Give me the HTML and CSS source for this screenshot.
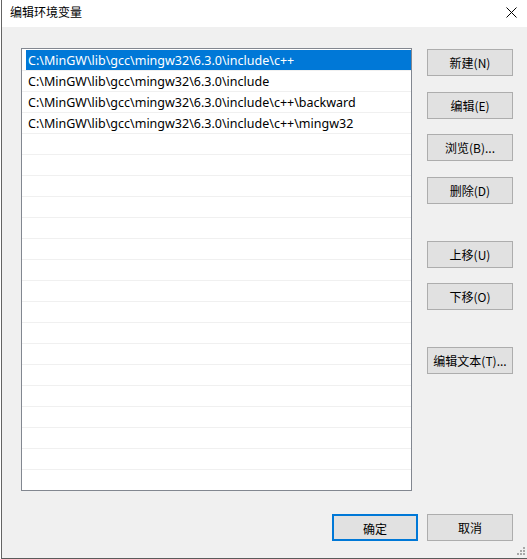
FILE: index.html
```html
<!DOCTYPE html>
<html lang="zh-CN">
<head>
<meta charset="utf-8">
<title>编辑环境变量</title>
<link rel="stylesheet" href="styles.css">
</head>
<body>
<div class="window">
  <div class="titlebar">
    <span class="title">编辑环境变量</span>
    <svg class="close" width="11" height="11" viewBox="0 0 11 11"><path d="M0.5 0.5 L10.5 10.5 M10.5 0.5 L0.5 10.5" stroke="#000" stroke-width="1" fill="none"/></svg>
  </div>
  <div class="content">
    <div class="main">
      <div class="listbox">
        <div class="row selected"><span>C:\MinGW\lib\gcc\mingw32\6.3.0\include\c++</span></div>
        <div class="row"><span>C:\MinGW\lib\gcc\mingw32\6.3.0\include</span></div>
        <div class="row"><span>C:\MinGW\lib\gcc\mingw32\6.3.0\include\c++\backward</span></div>
        <div class="row"><span>C:\MinGW\lib\gcc\mingw32\6.3.0\include\c++\mingw32</span></div>
        <div class="row"></div><div class="row"></div><div class="row"></div><div class="row"></div>
        <div class="row"></div><div class="row"></div><div class="row"></div><div class="row"></div>
        <div class="row"></div><div class="row"></div><div class="row"></div><div class="row"></div>
        <div class="row"></div><div class="row"></div><div class="row"></div><div class="row"></div>
        <div class="row"></div>
      </div>
      <div class="side">
        <button class="btn b-new">新建(N)</button>
        <button class="btn b-edit">编辑(E)</button>
        <button class="btn b-browse">浏览(B)...</button>
        <button class="btn b-del">删除(D)</button>
        <button class="btn b-up">上移(U)</button>
        <button class="btn b-down">下移(O)</button>
        <button class="btn b-text">编辑文本(T)...</button>
      </div>
    </div>
    <div class="footer">
      <button class="btn default">确定</button>
      <button class="btn">取消</button>
    </div>
    <div class="grip">
      <i class="d1"></i><i class="d2"></i><i class="d3"></i><i class="d4"></i><i class="d5"></i><i class="d6"></i>
    </div>
  </div>
</div>
</body>
</html>
```

FILE: styles.css
```css
html, body {
  margin: 0;
  padding: 0;
  background: #ffffff;
}
body {
  width: 527px;
  height: 559px;
  overflow: hidden;
  font-family: "Noto Sans", "Noto Sans CJK SC", sans-serif;
  font-size: 12px;
  color: #000;
}
.window {
  margin-left: 1px;
  width: 525px;
  height: 558px;
  border-left: 1px solid #646464;
  border-bottom: 1px solid #5a5a5a;
  display: flex;
  flex-direction: column;
  background: #f0f0f0;
}
.titlebar {
  height: 27px;
  background: #ffffff;
  display: flex;
  align-items: center;
  justify-content: space-between;
  padding: 0 10px 0 8px;
  flex: none;
}
.title {
  font-family: "Noto Sans CJK SC", sans-serif;
  font-size: 12px;
  line-height: 14px;
  margin-top: -3px;
  color: #000;
}
.close {
  margin-top: -3px;
  display: block;
}
.content {
  flex: 1;
  position: relative;
  padding: 21px 14px 0 19px;
  display: flex;
  flex-direction: column;
}
.main {
  display: flex;
  align-items: flex-start;
}
.listbox {
  width: 389px;
  height: 440px;
  border: 1px solid #828790;
  background: #fff;
  padding-top: 1px;
  box-sizing: content-box;
  overflow: hidden;
  flex: none;
}
.row {
  height: 20px;
  border-bottom: 1px solid #f0f0f0;
  display: flex;
  align-items: center;
  padding-left: 4px;
}
.row span {
  display: block;
  height: 20px;
  line-height: 21px;
  flex: 1;
  padding-left: 2px;
  font-family: "Noto Sans", "Noto Sans CJK SC", sans-serif;
  font-size: 12.5px;
  white-space: nowrap;
}
.row.selected span {
  background: #0078d7;
  color: #fff;
}
.side {
  display: flex;
  flex-direction: column;
  margin-left: 15px;
  padding-top: 1px;
}
.btn {
  width: 86px;
  height: 27px;
  box-sizing: border-box;
  background: #e1e1e1;
  border: 1px solid #adadad;
  border-radius: 0;
  font-family: "Noto Sans CJK SC", sans-serif;
  font-size: 12px;
  color: #000;
  padding: 0;
  margin: 0;
  line-height: 25px;
}
.b-edit { margin-top: 16px; }
.b-browse { margin-top: 15px; }
.b-del { margin-top: 16px; }
.b-up { margin-top: 37px; }
.b-down { margin-top: 15px; }
.b-text { margin-top: 37px; }
.footer {
  display: flex;
  justify-content: flex-end;
  gap: 9px;
  margin-top: 23px;
}
.btn.default {
  border: 2px solid #0078d7;
}
.grip {
  position: absolute;
  right: 0;
  bottom: 0;
  width: 11px;
  height: 11px;
}
.grip i {
  position: absolute;
  width: 2px;
  height: 2px;
  background: #a8a8a8;
}
.grip .d1 { left: 7px; top: 0; }
.grip .d2 { left: 4px; top: 3px; }
.grip .d3 { left: 7px; top: 3px; }
.grip .d4 { left: 1px; top: 6px; }
.grip .d5 { left: 4px; top: 6px; }
.grip .d6 { left: 7px; top: 6px; }
```
